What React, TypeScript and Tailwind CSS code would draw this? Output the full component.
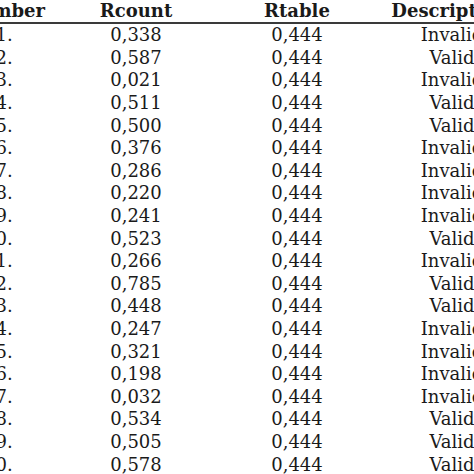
const rows: [string, string][] = [
  ["0,338", "Invalid"],
  ["0,587", "Valid"],
  ["0,021", "Invalid"],
  ["0,511", "Valid"],
  ["0,500", "Valid"],
  ["0,376", "Invalid"],
  ["0,286", "Invalid"],
  ["0,220", "Invalid"],
  ["0,241", "Invalid"],
  ["0,523", "Valid"],
  ["0,266", "Invalid"],
  ["0,785", "Valid"],
  ["0,448", "Valid"],
  ["0,247", "Invalid"],
  ["0,321", "Invalid"],
  ["0,198", "Invalid"],
  ["0,032", "Invalid"],
  ["0,534", "Valid"],
  ["0,505", "Valid"],
  ["0,578", "Valid"],
];

export default function App() {
  return (
    <div className="w-[474px] h-[474px] overflow-hidden bg-white text-[#1a1a1a] font-['DejaVu_Serif',serif] text-[18px] leading-none">
      <div className="ml-[-40px] w-[570px]">
        {/* header */}
        <div className="flex h-[24px] items-center border-b-2 border-[#3a3a3a] font-bold">
          <div className="w-[88px] text-center">Number</div>
          <div className="w-[176px] text-center">Rcount</div>
          <div className="w-[146px] text-center">Rtable</div>
          <div className="w-[160px] text-center">Description</div>
        </div>
        {rows.map(([rc, desc], i) => (
          <div key={i} className="flex h-[22.6px] items-center">
            <div className="w-[88px] pl-[24px]">{i + 11}.</div>
            <div className="w-[176px] text-center">{rc}</div>
            <div className="w-[146px] text-center">0,444</div>
            <div className="w-[160px] pl-[4px] text-center">{desc}</div>
          </div>
        ))}
      </div>
    </div>
  );
}
